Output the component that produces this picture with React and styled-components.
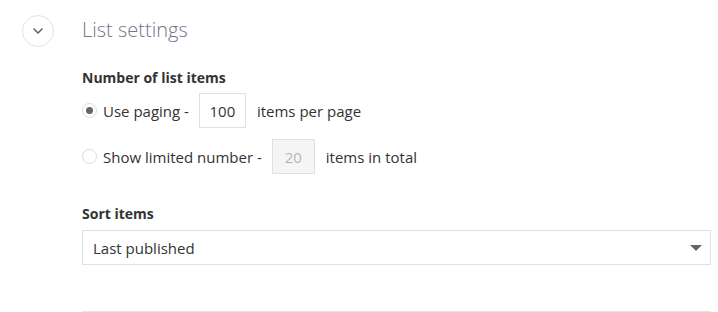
import styled, { createGlobalStyle } from 'styled-components';

const GlobalStyle = createGlobalStyle`
  body {
    margin: 0;
    background: #fff;
    font-family: 'Open Sans', 'Noto Sans', sans-serif;
    color: #333;
  }
`;

const Page = styled.div`
  display: flex;
  align-items: flex-start;
  padding: 15px 0 0 22px;
  width: 718px;
  height: 312px;
  box-sizing: border-box;
  overflow: hidden;
`;

const Toggle = styled.button`
  width: 32px;
  height: 32px;
  flex: none;
  border-radius: 50%;
  border: 1px solid #e2e2e2;
  background: #fff;
  display: flex;
  align-items: center;
  justify-content: center;
  padding: 0;
  cursor: pointer;
`;

const Content = styled.div`
  margin-left: 28px;
  width: 629px;
`;

const Title = styled.h2`
  margin: 1px 0 0;
  font-size: 20px;
  line-height: 28px;
  font-weight: 300;
  color: #7a6f88;
`;

const Section = styled.div`
  margin-top: ${({ $top }) => $top}px;
`;

const Label = styled.div`
  font-size: 14px;
  font-weight: 700;
  line-height: 20px;
  color: #333;
`;

const Row = styled.label`
  display: flex;
  align-items: center;
  height: 35px;
  margin-top: ${({ $top }) => $top}px;
  font-size: 15px;
  color: #333;
`;

const Radio = styled.span`
  width: 15px;
  height: 15px;
  box-sizing: border-box;
  border-radius: 50%;
  border: 1px solid #dcdcdc;
  display: flex;
  align-items: center;
  justify-content: center;
  margin-right: 6px;
  &::after {
    content: '';
    width: 7px;
    height: 7px;
    border-radius: 50%;
    background: ${({ $checked }) => ($checked ? '#666' : 'transparent')};
  }
`;

const NumberBox = styled.span`
  box-sizing: border-box;
  width: ${({ $w }) => $w}px;
  height: 35px;
  margin: 0 11px 0 10px;
  border: 1px solid #e0e0e0;
  background: ${({ $disabled }) => ($disabled ? '#f5f5f5' : '#fff')};
  color: ${({ $disabled }) => ($disabled ? '#b5b5b5' : '#333')};
  display: flex;
  align-items: center;
  justify-content: center;
  font-size: 15px;
`;

const Select = styled.div`
  margin-top: 6px;
  height: 35px;
  box-sizing: border-box;
  border: 1px solid #e0e0e0;
  display: flex;
  align-items: center;
  justify-content: space-between;
  padding: 0 8px 0 10px;
  font-size: 15px;
  color: #333;
`;

const Caret = styled.span`
  width: 0;
  height: 0;
  border-left: 6px solid transparent;
  border-right: 6px solid transparent;
  border-top: 6px solid #666;
`;

const Divider = styled.hr`
  margin: 46px 0 0;
  border: none;
  border-top: 1px solid #e4e4e4;
`;

export default function App() {
  return (
    <>
      <GlobalStyle />
      <Page>
        <Toggle aria-label="Collapse">
          <svg width="12" height="8" viewBox="0 0 12 8">
            <path d="M2 2l4 4 4-4" fill="none" stroke="#555" strokeWidth="1.4" strokeLinecap="round" strokeLinejoin="round" />
          </svg>
        </Toggle>
        <Content>
          <Title>List settings</Title>
          <Section $top={24}>
            <Label>Number of list items</Label>
            <Row $top={5}>
              <Radio $checked />
              Use paging -
              <NumberBox $w={47}>100</NumberBox>
              items per page
            </Row>
            <Row $top={11}>
              <Radio />
              Show limited number -
              <NumberBox $w={43} $disabled>20</NumberBox>
              items in total
            </Row>
          </Section>
          <Section $top={30}>
            <Label>Sort items</Label>
            <Select>
              Last published
              <Caret />
            </Select>
          </Section>
          <Divider />
        </Content>
      </Page>
    </>
  );
}
